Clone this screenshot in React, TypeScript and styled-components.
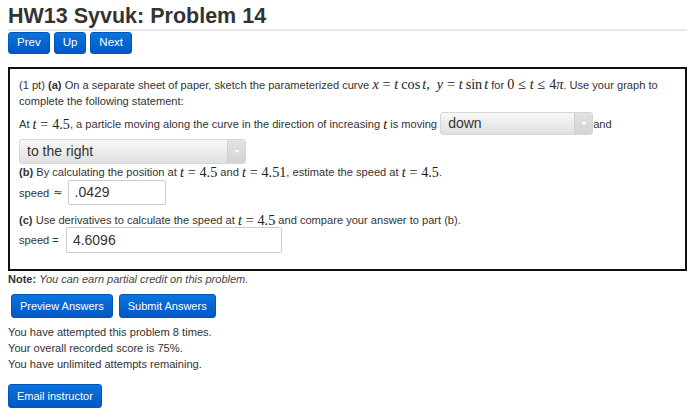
import styled, { createGlobalStyle } from "styled-components";

const GlobalStyle = createGlobalStyle`
  body {
    margin: 0;
    background: #fff;
    font-family: "Liberation Sans", Arial, sans-serif;
    color: #333;
  }
`;

const Page = styled.div`
  width: 692px;
  height: 420px;
  padding: 0 5px 0 8px;
  box-sizing: border-box;
  overflow: hidden;
`;

const Title = styled.h2`
  margin: 0;
  padding-top: 4px;
  height: 25px;
  font-size: 21.5px;
  font-weight: bold;
  color: #333;
  line-height: 25px;
  border-bottom: 2px solid #e6e6e6;
`;

const NavRow = styled.div`
  display: flex;
  gap: 4px;
  margin-top: 1px;
`;

const Button = styled.button<{ $big?: boolean }>`
  height: ${(p) => (p.$big ? 24 : 22)}px;
  padding: 0 8px;
  border: 1px solid #0256b8;
  border-radius: 3px;
  background: linear-gradient(#0c74de, #0058c4);
  color: #fff;
  font-family: "Liberation Sans", Arial, sans-serif;
  font-size: ${(p) => (p.$big ? 11 : 11.5)}px;
  line-height: 1;
  cursor: pointer;
`;

const Problem = styled.div`
  margin-top: 13px;
  width: 679px;
  height: 204px;
  box-sizing: border-box;
  border: 2px solid #111;
  padding: 7px 9px 0 9px;
  font-size: 11.1px;
  line-height: 16px;
`;

const Line = styled.div<{ $mt?: number }>`
  margin-top: ${(p) => p.$mt || 0}px;
  display: flex;
  align-items: center;
  white-space: pre;
`;

const Para = styled.div`
  line-height: 16px;
  white-space: nowrap;
`;

const Math = styled.span`
  font-family: "Liberation Serif", "Times New Roman", serif;
  font-size: 14.2px;
  color: #222;
  white-space: nowrap;
  i {
    font-style: italic;
  }
`;

const Rel = styled.span`
  margin: 0 3.8px;
`;

const Fn = styled.span`
  margin: 0 2px 0 3px;
`;

const Approx = styled.span`
  font-family: "DejaVu Sans", sans-serif;
  font-size: 11px;
  margin: 0 1px;
`;

const Select = styled.div<{ $w: number; $h: number }>`
  width: ${(p) => p.$w}px;
  height: ${(p) => p.$h}px;
  line-height: ${(p) => p.$h - 2}px;
  box-sizing: border-box;
  display: flex;
  border: 1px solid #d6d6d6;
  border-radius: 3px;
  background: linear-gradient(#f7f7f7, #e0e0e0);
  font-size: 14px;
  color: #333;
`;

const SelectLabel = styled.div`
  flex: 1;
  padding-left: 7px;
`;

const SelectArrow = styled.div`
  width: 17px;
  border-left: 1px solid #d0d0d0;
  background: linear-gradient(#e2e2e2, #d4d4d4);
  display: flex;
  align-items: center;
  justify-content: center;
  border-radius: 0 3px 3px 0;
  &::after {
    content: "";
    border-left: 3px solid transparent;
    border-right: 3px solid transparent;
    border-top: 3px solid #fff;
  }
`;

const Input = styled.div<{ $w: number; $h: number }>`
  width: ${(p) => p.$w}px;
  height: ${(p) => p.$h}px;
  box-sizing: border-box;
  border: 1px solid #ccc;
  border-radius: 2px;
  padding-left: 6px;
  font-size: 14px;
  line-height: ${(p) => p.$h - 2}px;
  color: #333;
  margin-left: 4px;
`;

const Note = styled.div`
  margin-top: 0;
  font-size: 11px;
  line-height: 16px;
  i {
    color: #444;
  }
`;

const ActionRow = styled.div`
  display: flex;
  gap: 6px;
  margin: 7px 0 0 3px;
`;

const Info = styled.div`
  margin-top: 6px;
  font-size: 11.1px;
  line-height: 16px;
`;

const EmailRow = styled.div`
  margin-top: 12px;
`;

const T = ({ v }: { v: string }) => (
  <Math>
    <i>t</i>
    <Rel>=</Rel>
    {v}
  </Math>
);

export default function App() {
  return (
    <Page>
      <GlobalStyle />
      <Title>HW13 Syvuk: Problem 14</Title>
      <NavRow>
        <Button>Prev</Button>
        <Button>Up</Button>
        <Button>Next</Button>
      </NavRow>
      <Problem>
        <Para>
          (1 pt) <b>(a)</b> On a separate sheet of paper, sketch the parameterized curve{" "}
          <Math>
            <i>x</i>
            <Rel>=</Rel>
            <i>t</i>
            <Fn>cos</Fn>
            <i>t</i>,&nbsp;&nbsp;<i>y</i>
            <Rel>=</Rel>
            <i>t</i>
            <Fn>sin</Fn>
            <i>t</i>
          </Math>{" "}
          for{" "}
          <Math>
            0<Rel>≤</Rel>
            <i>t</i>
            <Rel>≤</Rel>4<i>π</i>
          </Math>
          . Use your graph to
          <br />
          complete the following statement:
        </Para>
        <Line $mt={3}>
          At <Math><i>t</i></Math>
          <Math><Rel>=</Rel>4.5</Math>, a particle moving along the curve in the direction of
          increasing <Math><i>t</i></Math> is moving{" "}
          <Select $w={153} $h={23}>
            <SelectLabel>down</SelectLabel>
            <SelectArrow />
          </Select>
          {"  "}and
        </Line>
        <Line $mt={4}>
          <Select $w={227} $h={25}>
            <SelectLabel>to the right</SelectLabel>
            <SelectArrow />
          </Select>
        </Line>
        <Line>
          <b>(b)</b> By calculating the position at <T v="4.5" /> and <T v="4.51" />, estimate the
          speed at <T v="4.5" />.
        </Line>
        <Line>
          speed <Approx>≈</Approx> <Input $w={98} $h={25}>.0429</Input>
        </Line>
        <Line $mt={7}>
          <b>(c)</b> Use derivatives to calculate the speed at <T v="4.5" /> and compare your
          answer to part (b).
        </Line>
        <Line $mt={-1}>
          speed = <Input $w={216} $h={26}>4.6096</Input>
        </Line>
      </Problem>
      <Note>
        <b>Note:</b> <i>You can earn partial credit on this problem.</i>
      </Note>
      <ActionRow>
        <Button $big>Preview Answers</Button>
        <Button $big>Submit Answers</Button>
      </ActionRow>
      <Info>
        You have attempted this problem 8 times.
        <br />
        Your overall recorded score is 75%.
        <br />
        You have unlimited attempts remaining.
      </Info>
      <EmailRow>
        <Button $big>Email instructor</Button>
      </EmailRow>
    </Page>
  );
}
